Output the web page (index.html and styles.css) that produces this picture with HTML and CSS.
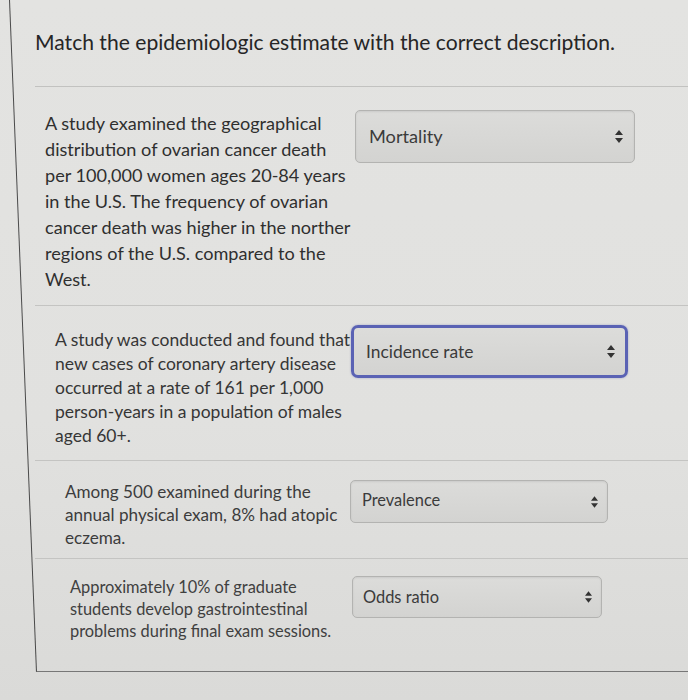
FILE: index.html
```html
<!DOCTYPE html>
<html lang="en">
  <head>
    <meta charset="UTF-8" />
    <meta name="viewport" content="width=device-width, initial-scale=1.0" />
    <title>Matching Question</title>
    <link rel="stylesheet" href="styles.css">
  </head>
  <body>
    <div class="page">
      <h1 class="prompt">Match the epidemiologic estimate with the correct description.</h1>

      <div class="row r1">
        <p class="desc">A study examined the geographical distribution of ovarian cancer death per 100,000 women ages 20-84 years in the U.S. The frequency of ovarian cancer death was higher in the norther regions of the U.S. compared to the West.</p>
        <div class="select">
          <span>Mortality</span>
          <svg class="arrows" width="8" height="13" viewBox="0 0 8 13"><path d="M4 0L8 5H0Z M4 13L8 8H0Z" fill="#333"/></svg>
        </div>
      </div>

      <div class="row r2">
        <p class="desc">A study was conducted and found that new cases of coronary artery disease occurred at a rate of 161 per 1,000 person-years in a population of males aged 60+.</p>
        <div class="select focused">
          <span>Incidence rate</span>
          <svg class="arrows" width="8" height="13" viewBox="0 0 8 13"><path d="M4 0L8 5H0Z M4 13L8 8H0Z" fill="#333"/></svg>
        </div>
      </div>

      <div class="row r3">
        <p class="desc">Among 500 examined during the annual physical exam, 8% had atopic eczema.</p>
        <div class="select">
          <span>Prevalence</span>
          <svg class="arrows" width="7" height="12" viewBox="0 0 8 13"><path d="M4 0L8 5H0Z M4 13L8 8H0Z" fill="#333"/></svg>
        </div>
      </div>

      <div class="row r4">
        <p class="desc">Approximately 10% of graduate students develop gastrointestinal problems during final exam sessions.</p>
        <div class="select">
          <span>Odds ratio</span>
          <svg class="arrows" width="7" height="12" viewBox="0 0 8 13"><path d="M4 0L8 5H0Z M4 13L8 8H0Z" fill="#333"/></svg>
        </div>
      </div>
    </div>
  </body>
</html>
```

FILE: styles.css
```css
body {
  margin: 0;
  background: linear-gradient(180deg, #e3e3e1 0%, #e1e1df 60%, #dadad8 100%);
  font-family: Lato, "Open Sans", sans-serif;
  color: #333;
}
.page {
  position: relative;
  padding: 30px 0 0 35px;
  height: 670px;
  overflow: hidden;
}
/* question frame, leaning a bit as it goes down */
.page::before {
  content: "";
  position: absolute;
  left: 9px;
  top: 0;
  width: 100%;
  height: 671px;
  border-left: 1px solid #4a4a4a;
  border-bottom: 1px solid #777;
  transform: skewX(2.3deg);
  transform-origin: top left;
  pointer-events: none;
}
.prompt {
  margin: 0;
  padding-bottom: 32px;
  font-size: 21.1px;
  font-weight: 400;
  line-height: 24px;
  color: #262626;
  border-bottom: 1px solid #c2c2c0;
}
.row {
  display: flex;
  align-items: flex-start;
  border-bottom: 1px solid #c4c4c2;
}
.desc {
  margin: 0;
  flex: none;
}
.select {
  display: flex;
  align-items: center;
  justify-content: space-between;
  box-sizing: border-box;
  background: linear-gradient(180deg, #dcdcda, #d3d3d1);
  border: 1px solid #b3b3b1;
  border-radius: 5px;
  box-shadow: inset 0 1px 2px rgba(0, 0, 0, 0.08);
  color: #3b3b3b;
}
.select.focused {
  border: 3px solid #5a62b4;
  border-radius: 7px;
  box-shadow: 0 0 2px rgba(90, 98, 180, 0.5);
}

.r1 { padding: 23px 0 13px 10px; }
.r1 .desc { width: 310px; font-size: 18.1px; line-height: 26px; color: #2f2f2f; }
.r1 .select { width: 280px; height: 53px; margin-top: 0; padding: 0 11px 0 13px; font-size: 18.2px; }
.r1 .select span { margin-top: -1px; }

.r2 { padding: 22px 0 12px 20px; }
.r2 .desc { width: 296px; font-size: 17.5px; line-height: 24px; color: #363636; }
.r2 .select { width: 277px; height: 53px; margin-top: -3px; padding: 0 10px 0 12px; font-size: 17.4px; }

.r3 { padding: 19px 0 9px 30px; }
.r3 .desc { width: 285px; font-size: 17.1px; line-height: 23px; color: #3c3c3c; }
.r3 .select { width: 258px; height: 43px; padding: 0 9px 0 11px; font-size: 16.4px; }
.r3 .select span { margin-top: -4px; }

.r4 { padding: 17px 0 28px 35px; border-bottom: none; }
.r4 .desc { width: 280px; font-size: 16.4px; line-height: 22px; color: #404040; }
.r4 .select { width: 250px; height: 42px; margin-left: 2px; padding: 0 9px 0 10px; font-size: 16.4px; }
.r4 .select span { margin-top: -2px; }
```
